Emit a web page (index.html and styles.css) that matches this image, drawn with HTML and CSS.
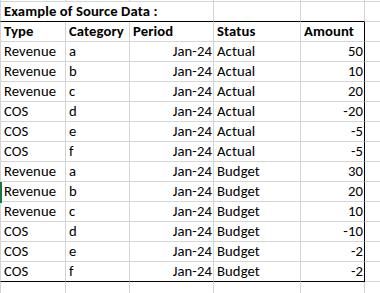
FILE: index.html
```html
<!DOCTYPE html>
<html>
<head>
<meta charset="utf-8">
<link rel="stylesheet" href="styles.css">
</head>
<body>
<div class="sheet">
  <div class="grid">
    <div class="cell a row0"></div><div class="cell row0"></div><div class="cell row0"></div><div class="cell row0"></div><div class="cell row0"></div><div class="cell row0"></div>

    <div class="cell a title span3 bb">Example of Source Data :</div><div class="cell bb"></div><div class="cell bb"></div><div class="cell"></div>

    <div class="cell a hd">Type</div><div class="cell hd">Category</div><div class="cell hd">Period</div><div class="cell hd">Status</div><div class="cell hd br">Amount</div><div class="cell"></div>

    <div class="cell a">Revenue</div><div class="cell">a</div><div class="cell num">Jan-24</div><div class="cell">Actual</div><div class="cell num br">50</div><div class="cell"></div>
    <div class="cell a">Revenue</div><div class="cell">b</div><div class="cell num">Jan-24</div><div class="cell">Actual</div><div class="cell num br">10</div><div class="cell"></div>
    <div class="cell a">Revenue</div><div class="cell">c</div><div class="cell num">Jan-24</div><div class="cell">Actual</div><div class="cell num br">20</div><div class="cell"></div>
    <div class="cell a">COS</div><div class="cell">d</div><div class="cell num">Jan-24</div><div class="cell">Actual</div><div class="cell num br">-20</div><div class="cell"></div>
    <div class="cell a">COS</div><div class="cell">e</div><div class="cell num">Jan-24</div><div class="cell">Actual</div><div class="cell num br">-5</div><div class="cell"></div>
    <div class="cell a">COS</div><div class="cell">f</div><div class="cell num">Jan-24</div><div class="cell">Actual</div><div class="cell num br">-5</div><div class="cell"></div>
    <div class="cell a">Revenue</div><div class="cell">a</div><div class="cell num">Jan-24</div><div class="cell">Budget</div><div class="cell num br">30</div><div class="cell"></div>
    <div class="cell a">Revenue</div><div class="cell">b</div><div class="cell num">Jan-24</div><div class="cell">Budget</div><div class="cell num br">20</div><div class="cell"></div>
    <div class="cell a">Revenue</div><div class="cell">c</div><div class="cell num">Jan-24</div><div class="cell">Budget</div><div class="cell num br">10</div><div class="cell"></div>
    <div class="cell a">COS</div><div class="cell">d</div><div class="cell num">Jan-24</div><div class="cell">Budget</div><div class="cell num br">-10</div><div class="cell"></div>
    <div class="cell a">COS</div><div class="cell">e</div><div class="cell num">Jan-24</div><div class="cell">Budget</div><div class="cell num br">-2</div><div class="cell"></div>
    <div class="cell a bb">COS</div><div class="cell bb">f</div><div class="cell num bb">Jan-24</div><div class="cell bb">Budget</div><div class="cell num br bb">-2</div><div class="cell"></div>

    <div class="cell a"></div><div class="cell"></div><div class="cell"></div><div class="cell"></div><div class="cell"></div><div class="cell"></div>
  </div>
  <div class="sel"></div>
</div>
</body>
</html>
```

FILE: styles.css
```css
html, body {
  margin: 0;
  padding: 0;
  background: #ffffff;
}

.sheet {
  position: relative;
  width: 380px;
  height: 293px;
  overflow: hidden;
  font-family: Carlito, Calibri, Lato, sans-serif;
  font-size: 14.67px;
  letter-spacing: 0.1px;
  color: #000000;
}

.grid {
  display: grid;
  grid-template-columns: 66px 64px 84px 87px 64px 80px;
  grid-template-rows: 2px repeat(14, 20px) 20px;
  width: 445px;
}

.cell {
  box-sizing: border-box;
  border-right: 1px solid #d4d4d4;
  border-bottom: 1px solid #d4d4d4;
  padding: 0 3px;
  line-height: 19px;
  white-space: nowrap;
  overflow: visible;
}

.cell.a {
  border-left: 1px solid #d4d4d4;
}

.cell.row0 {
  padding: 0;
  line-height: 0;
}

.span3 {
  grid-column: span 3;
}

.title,
.hd {
  font-weight: bold;
}

.num {
  text-align: right;
  padding: 0 1px 0 3px;
}

.cell.bb {
  border-bottom-color: #000000;
}

.cell.br {
  border-right-color: #000000;
}

.sel {
  position: absolute;
  left: 0;
  top: 182px;
  width: 2px;
  height: 21px;
  background: #217346;
}
```
